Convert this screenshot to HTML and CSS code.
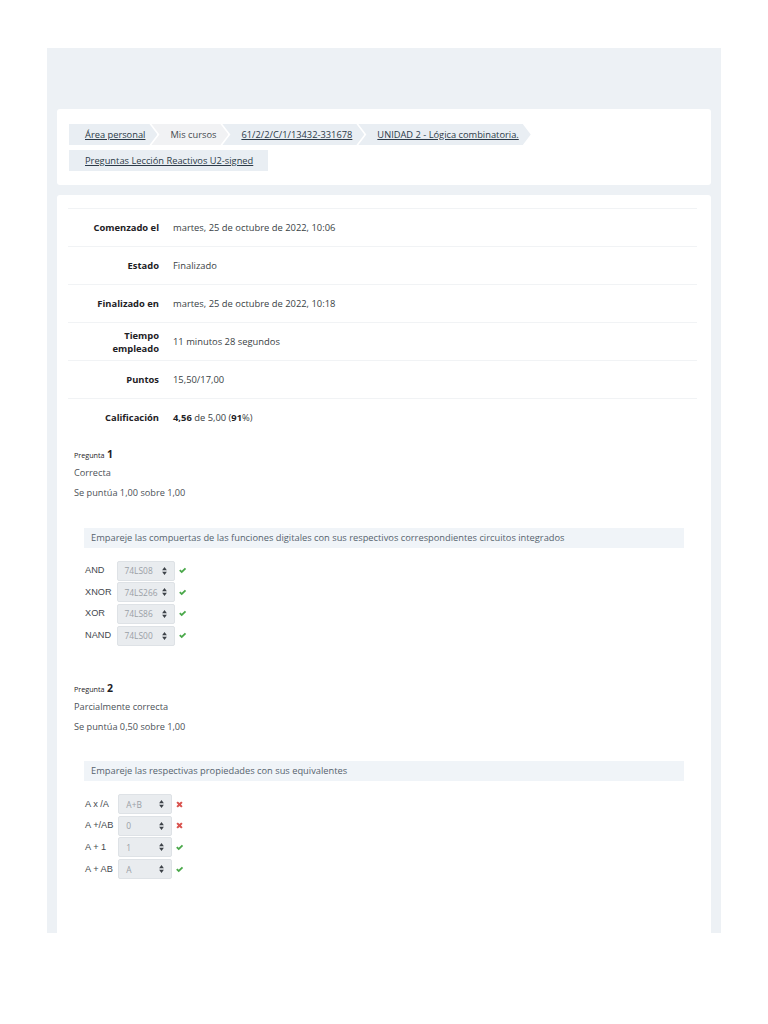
FILE: index.html
```html
<!DOCTYPE html>
<html lang="es">
<head>
<meta charset="utf-8">
<title>Preguntas Lección Reactivos U2-signed</title>
<link rel="stylesheet" href="styles.css">
</head>
<body>
<div class="page">
  <div class="card crumbs-card">
    <ol class="crumbs">
      <li class="first link"><a href="#">Área personal</a></li>
      <li class="plain"><span>Mis cursos</span></li>
      <li class="link"><a href="#">61/2/2/C/1/13432-331678</a></li>
      <li class="link"><a href="#">UNIDAD 2 - Lógica combinatoria.</a></li>
      <li class="last link"><a href="#">Preguntas Lección Reactivos U2-signed</a></li>
    </ol>
  </div>

  <div class="card main">
    <div class="summary">
      <div class="row"><div class="lbl">Comenzado el</div><div class="val">martes, 25 de octubre de 2022, 10:06</div></div>
      <div class="row"><div class="lbl">Estado</div><div class="val">Finalizado</div></div>
      <div class="row"><div class="lbl">Finalizado en</div><div class="val">martes, 25 de octubre de 2022, 10:18</div></div>
      <div class="row"><div class="lbl">Tiempo empleado</div><div class="val">11 minutos 28 segundos</div></div>
      <div class="row"><div class="lbl">Puntos</div><div class="val">15,50/17,00</div></div>
      <div class="row"><div class="lbl">Calificación</div><div class="val"><b>4,56</b> de 5,00 (<b>91</b>%)</div></div>
    </div>

    <div class="que">
      <div class="info">
        <div class="no"><span class="qlabel">Pregunta</span> <span class="qno">1</span></div>
        <div class="state">Correcta</div>
        <div class="grade">Se puntúa 1,00 sobre 1,00</div>
      </div>
      <div class="qtext">Empareje las compuertas de las funciones digitales con sus respectivos correspondientes circuitos integrados</div>
      <div class="answer q1">
        <span class="alabel">AND</span>
        <span class="select">74LS08<svg class="caret" viewBox="0 0 6 10"><path d="M3 0 L6 4 H0 Z M3 10 L6 6 H0 Z"/></svg></span>
        <svg class="mark ok" viewBox="0 0 16 16"><path d="M2 8.5 L4.3 6.2 L6.6 8.5 L12.2 2.9 L14.5 5.2 L6.6 13.1 Z"/></svg>

        <span class="alabel">XNOR</span>
        <span class="select">74LS266<svg class="caret" viewBox="0 0 6 10"><path d="M3 0 L6 4 H0 Z M3 10 L6 6 H0 Z"/></svg></span>
        <svg class="mark ok" viewBox="0 0 16 16"><path d="M2 8.5 L4.3 6.2 L6.6 8.5 L12.2 2.9 L14.5 5.2 L6.6 13.1 Z"/></svg>

        <span class="alabel">XOR</span>
        <span class="select">74LS86<svg class="caret" viewBox="0 0 6 10"><path d="M3 0 L6 4 H0 Z M3 10 L6 6 H0 Z"/></svg></span>
        <svg class="mark ok" viewBox="0 0 16 16"><path d="M2 8.5 L4.3 6.2 L6.6 8.5 L12.2 2.9 L14.5 5.2 L6.6 13.1 Z"/></svg>

        <span class="alabel">NAND</span>
        <span class="select">74LS00<svg class="caret" viewBox="0 0 6 10"><path d="M3 0 L6 4 H0 Z M3 10 L6 6 H0 Z"/></svg></span>
        <svg class="mark ok" viewBox="0 0 16 16"><path d="M2 8.5 L4.3 6.2 L6.6 8.5 L12.2 2.9 L14.5 5.2 L6.6 13.1 Z"/></svg>
      </div>
    </div>

    <div class="que q2">
      <div class="info">
        <div class="no"><span class="qlabel">Pregunta</span> <span class="qno">2</span></div>
        <div class="state">Parcialmente correcta</div>
        <div class="grade">Se puntúa 0,50 sobre 1,00</div>
      </div>
      <div class="qtext">Empareje las respectivas propiedades con sus equivalentes</div>
      <div class="answer q2ans">
        <span class="alabel">A x /A</span>
        <span class="select">A+B<svg class="caret" viewBox="0 0 6 10"><path d="M3 0 L6 4 H0 Z M3 10 L6 6 H0 Z"/></svg></span>
        <svg class="mark bad" viewBox="0 0 16 16"><path d="M2.5 5 L5 2.5 L8 5.5 L11 2.5 L13.5 5 L10.5 8 L13.5 11 L11 13.5 L8 10.5 L5 13.5 L2.5 11 L5.5 8 Z"/></svg>

        <span class="alabel">A +/AB</span>
        <span class="select">0<svg class="caret" viewBox="0 0 6 10"><path d="M3 0 L6 4 H0 Z M3 10 L6 6 H0 Z"/></svg></span>
        <svg class="mark bad" viewBox="0 0 16 16"><path d="M2.5 5 L5 2.5 L8 5.5 L11 2.5 L13.5 5 L10.5 8 L13.5 11 L11 13.5 L8 10.5 L5 13.5 L2.5 11 L5.5 8 Z"/></svg>

        <span class="alabel">A + 1</span>
        <span class="select">1<svg class="caret" viewBox="0 0 6 10"><path d="M3 0 L6 4 H0 Z M3 10 L6 6 H0 Z"/></svg></span>
        <svg class="mark ok" viewBox="0 0 16 16"><path d="M2 8.5 L4.3 6.2 L6.6 8.5 L12.2 2.9 L14.5 5.2 L6.6 13.1 Z"/></svg>

        <span class="alabel">A + AB</span>
        <span class="select">A<svg class="caret" viewBox="0 0 6 10"><path d="M3 0 L6 4 H0 Z M3 10 L6 6 H0 Z"/></svg></span>
        <svg class="mark ok" viewBox="0 0 16 16"><path d="M2 8.5 L4.3 6.2 L6.6 8.5 L12.2 2.9 L14.5 5.2 L6.6 13.1 Z"/></svg>
      </div>
    </div>
  </div>
</div>
</body>
</html>
```

FILE: styles.css
```css
* { box-sizing: border-box; }

body {
  margin: 0;
  background: #ffffff;
  font-family: "Open Sans", "Noto Sans", sans-serif;
  font-size: 9.2px;
  line-height: 13px;
  color: #3d4248;
}

.page {
  margin: 48px 0 0 47px;
  width: 674px;
  height: 885px;
  background: #edf1f5;
  padding: 61px 10px 0 10px;
  display: flex;
  flex-direction: column;
}

.card {
  background: #ffffff;
  border-radius: 3px;
}

/* Breadcrumb */
.crumbs-card {
  padding: 15px 12px 14px 12px;
  margin-bottom: 10px;
}

.crumbs {
  list-style: none;
  margin: 0;
  padding: 0;
  display: flex;
  flex-wrap: wrap;
  row-gap: 5px;
  font-size: 9.3px;
}

.crumbs li {
  height: 21px;
  line-height: 21px;
  padding: 0 12px 0 19px;
  margin-left: -6px;
  background: #e9eef3;
  clip-path: polygon(0 0, calc(100% - 8px) 0, 100% 50%, calc(100% - 8px) 100%, 0 100%, 8px 50%);
}

.crumbs li.first {
  padding-left: 16px;
  margin-left: 0;
  clip-path: polygon(0 0, calc(100% - 8px) 0, 100% 50%, calc(100% - 8px) 100%, 0 100%);
}

.crumbs li.plain {
  background: #f1f2f4;
}

.crumbs li.last {
  margin-left: 0;
  padding: 0 15px 0 16px;
  clip-path: none;
}

.crumbs a {
  color: #2c3a48;
  text-decoration: underline;
}

.crumbs span {
  color: #454a50;
}

/* Main card */
.main {
  flex: 1;
  border-radius: 3px 3px 0 0;
  padding: 13px 14px 0 11px;
}

.summary {
  font-size: 9.4px;
}

.summary .row {
  display: flex;
  align-items: center;
  min-height: 38px;
  border-top: 1px solid #f1f3f5;
}

.summary .lbl {
  width: 98px;
  flex: none;
  padding: 0 7px 0 19px;
  text-align: right;
  font-weight: 700;
  color: #1d2125;
}

.summary .val {
  padding-left: 7px;
  color: #3a3f45;
}

.summary .val b {
  color: #1d2125;
}

/* Questions */
.que {
  margin-top: 12px;
  padding-left: 6px;
}

.que.q2 {
  margin-top: 36px;
}

.info > div {
  margin-bottom: 7px;
}

.info .no {
  margin-bottom: 4px;
  color: #1d2125;
}

.qlabel {
  font-size: 7.2px;
}

.qno {
  font-size: 10.5px;
  font-weight: 700;
}

.state, .grade {
  color: #4c5157;
}

.qtext {
  margin: 28.5px 13px 13px 10px;
  height: 20px;
  line-height: 20px;
  padding-left: 7px;
  background: #f0f4f8;
  color: #56636e;
  font-size: 9.3px;
}

.answer {
  display: grid;
  grid-template-columns: auto auto auto;
  justify-content: start;
  align-items: center;
  column-gap: 5px;
  row-gap: 1.7px;
  margin-left: 11px;
}

.alabel {
  font-family: "Liberation Sans", Arial, sans-serif;
  font-size: 9.2px;
  color: #44494e;
}

.select {
  display: flex;
  align-items: center;
  justify-content: space-between;
  width: 58px;
  height: 20px;
  padding: 0 7px 0 7px;
  background: #e9ecef;
  border: 1px solid #dee2e6;
  border-radius: 2px;
  font-size: 8.4px;
  color: #9aa0a6;
}

.q2ans .select {
  width: 54px;
  padding-left: 7px;
}

.caret {
  width: 5px;
  height: 8px;
  fill: #3d4248;
}

.mark {
  width: 9px;
  height: 9px;
  margin-left: -2px;
}

.mark.ok { fill: #4aa84a; }
.mark.bad { fill: #d9534f; }
```
